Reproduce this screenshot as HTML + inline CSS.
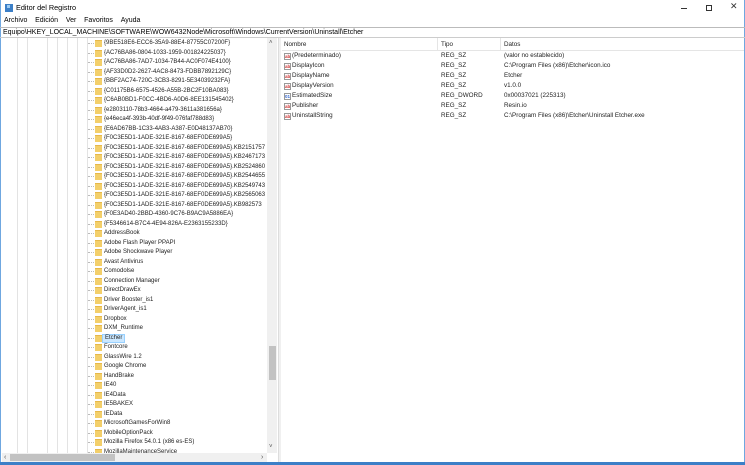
<!DOCTYPE html>
<html><head><meta charset="utf-8"><style>
*{margin:0;padding:0;box-sizing:border-box}
body{width:745px;height:465px;overflow:hidden;background:#fff;font-family:"Liberation Sans",sans-serif;position:relative;color:#000}
.abs{position:absolute}
.t{font-size:7px;white-space:nowrap;line-height:9px}
.vl{position:absolute;top:38px;height:415px;width:1px;background:#e3e3e3}
.row{position:absolute;left:88px;height:9px;font-size:6px;line-height:9px;white-space:nowrap;color:#222}
.row:before{content:"";position:absolute;left:0;top:4px;width:6px;border-top:1px dotted #bbb}
.row i{position:absolute;left:7px;top:1px;width:7px;height:7px;background:#f3cf6a;border-top:1px solid #e6b84a}
.row span{position:absolute;left:16px}
.r{position:absolute;font-size:6.3px;white-space:nowrap;color:#222}
.ic{position:absolute;left:284px;width:7px;height:7px;border:1px solid #999;background:#fff;font-size:4.5px;line-height:5px;color:#c33;font-weight:bold;text-align:center}
</style></head><body>
<div class="abs" style="left:0;top:0;width:745px;height:465px;border:1px solid #6fa7e0;border-top:none"></div>
<div class="abs" style="left:5px;top:4px;width:8px;height:8px;background:#3c7fc7"></div>
<div class="abs" style="left:7px;top:5px;width:3px;height:3px;background:#9ccbf3"></div>
<div class="abs t" style="left:16px;top:3px;font-size:7.3px">Editor del Registro</div>
<div class="abs" style="left:681px;top:8px;width:6px;border-top:1px solid #333"></div>
<div class="abs" style="left:706px;top:5px;width:6px;height:6px;border:1px solid #333"></div>
<div class="abs t" style="left:730px;top:2px;font-size:9px;color:#333">✕</div>
<div class="abs t" style="left:4px;top:16px">Archivo&nbsp;&nbsp;&nbsp;&nbsp;Edición&nbsp;&nbsp;&nbsp;&nbsp;Ver&nbsp;&nbsp;&nbsp;&nbsp;Favoritos&nbsp;&nbsp;&nbsp;&nbsp;Ayuda</div>
<div class="abs" style="left:0;top:27px;width:745px;height:11px;border-top:1px solid #bbb;border-bottom:1px solid #ccc"></div>
<div class="abs t" style="left:3px;top:27.5px;font-size:7px">Equipo\HKEY_LOCAL_MACHINE\SOFTWARE\WOW6432Node\Microsoft\Windows\CurrentVersion\Uninstall\Etcher</div>
<div class="vl" style="left:17px"></div><div class="vl" style="left:27px"></div><div class="vl" style="left:47px"></div><div class="vl" style="left:57px"></div><div class="vl" style="left:67px"></div><div class="vl" style="left:77px"></div><div class="vl" style="left:87px"></div>
<div id="tree"></div>
<div class="abs" style="left:267px;top:38px;width:10px;height:415px;background:#f0f0f0"></div>
<div class="abs" style="left:269px;top:346px;width:7px;height:34px;background:#c2c2c2"></div>
<div class="abs t" style="left:269px;top:39px;font-size:6px;color:#555">˄</div>
<div class="abs t" style="left:269px;top:443px;font-size:6px;color:#555">˅</div>
<div class="abs" style="left:2px;top:453px;width:265px;height:9px;background:#f0f0f0"></div>
<div class="abs" style="left:10px;top:454px;width:105px;height:7px;background:#c2c2c2"></div>
<div class="abs t" style="left:4px;top:453px;font-size:7px;color:#555">‹</div>
<div class="abs t" style="left:261px;top:453px;font-size:7px;color:#555">›</div>
<div class="abs" style="left:278px;top:38px;width:3px;height:424px;background:#f0f0f0;border-left:1px solid #ddd"></div>
<div class="abs" style="left:0;top:462px;width:745px;height:3px;background:#3c7fc7"></div>
<div class="abs" style="left:282px;top:38px;width:462px;height:13px;border-bottom:1px solid #e5e5e5"></div>
<div class="abs" style="left:437px;top:38px;width:1px;height:12px;background:#e5e5e5"></div>
<div class="abs" style="left:500px;top:38px;width:1px;height:12px;background:#e5e5e5"></div>
<div class="r" style="left:284px;top:41px">Nombre</div>
<div class="r" style="left:441px;top:41px">Tipo</div>
<div class="r" style="left:504px;top:41px">Datos</div>
<div id="vals"></div>
<script>
var items=["{9BE518E6-ECC6-35A9-88E4-87755C07200F}","{AC76BA86-0804-1033-1959-001824225037}","{AC76BA86-7AD7-1034-7B44-AC0F074E4100}","{AF33D0D2-2627-4AC8-8473-FDBB7892129C}","{BBF2AC74-720C-3CB3-8291-5E34039232FA}","{C01175B6-6575-4526-A55B-2BC2F10BA083}","{C6AB0BD1-F0CC-4BD6-A0D6-8EE131545402}","{e2803110-78b3-4664-a479-3611a381656a}","{e46eca4f-393b-40df-9f49-076faf788d83}","{E6AD67BB-1C33-4AB3-A387-E0D48137AB70}","{F0C3E5D1-1ADE-321E-8167-68EF0DE699A5}"];
["2151757","2467173","2524860","2544655","2549743","2565063","982573"].forEach(function(k){items.push("{F0C3E5D1-1ADE-321E-8167-68EF0DE699A5}.KB"+k)});
items=items.concat(["{F0E3AD40-2BBD-4360-9C76-B9AC9A5886EA}","{F5346614-B7C4-4E94-826A-E2363155233D}","AddressBook","Adobe Flash Player PPAPI","Adobe Shockwave Player","Avast Antivirus","Comodolse","Connection Manager","DirectDrawEx","Driver Booster_is1","DriverAgent_is1","Dropbox","DXM_Runtime","Etcher","Fontcore","GlassWire 1.2","Google Chrome","HandBrake","IE40","IE4Data","IE5BAKEX","IEData","MicrosoftGamesForWin8","MobileOptionPack","Mozilla Firefox 54.0.1 (x86 es-ES)","MozillaMaintenanceService"]);
var h="";items.forEach(function(s,i){var y=Math.round(39+i*9.5);var sel=s=="Etcher";
h+='<div class="row" style="top:'+y+'px"><i></i><span'+(sel?' style="background:#cce8ff;border:1px solid #99d1ff;padding:0 2px;left:14px;line-height:7px;top:0"':'')+'>'+s+'</span></div>';});
document.getElementById("tree").innerHTML=h;
var v=[["(Predeterminado)","REG_SZ","(valor no establecido)"],["DisplayIcon","REG_SZ","C:\\Program Files (x86)\\Etcher\\icon.ico"],["DisplayName","REG_SZ","Etcher"],["DisplayVersion","REG_SZ","v1.0.0"],["EstimatedSize","REG_DWORD","0x00037021 (225313)"],["Publisher","REG_SZ","Resin.io"],["UninstallString","REG_SZ","C:\\Program Files (x86)\\Etcher\\Uninstall Etcher.exe"]];
h="";v.forEach(function(r,i){var y=52+i*10;
h+='<div class="ic" style="top:'+(y+1)+'px;'+(i==4?'color:#36c':'')+'">'+(i==4?'01':'ab')+'</div><div class="r" style="left:292px;top:'+y+'px">'+r[0]+'</div><div class="r" style="left:441px;top:'+y+'px">'+r[1]+'</div><div class="r" style="left:504px;top:'+y+'px">'+r[2]+'</div>';});
document.getElementById("vals").innerHTML=h;
</script>
</body></html>
